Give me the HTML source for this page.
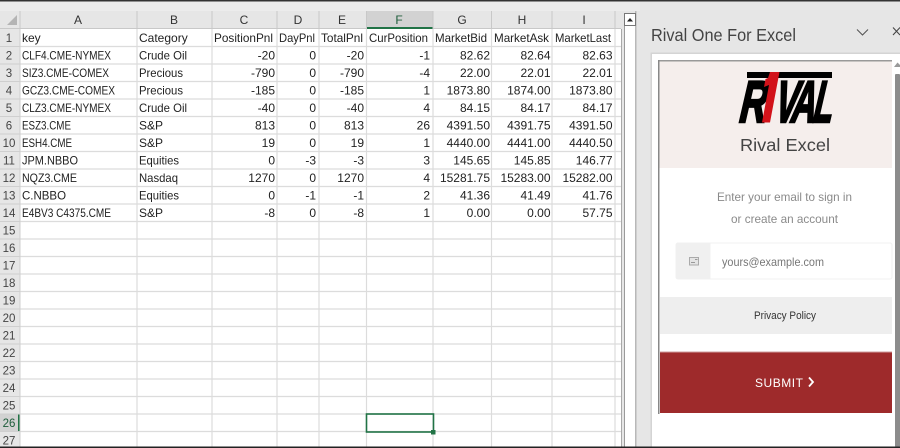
<!DOCTYPE html>
<html><head><meta charset="utf-8">
<style>
html,body{margin:0;padding:0;width:900px;height:448px;overflow:hidden;background:#fff}
svg{display:block}
.c{font:12px "Liberation Sans",sans-serif;fill:#222}
.e{text-anchor:end}
.h{font:12px "Liberation Sans",sans-serif;fill:#333;text-anchor:middle}
.r{font:11.5px "Liberation Sans",sans-serif;fill:#444;text-anchor:middle}
</style></head><body>
<svg width="900" height="448" viewBox="0 0 900 448" xmlns="http://www.w3.org/2000/svg">
<rect width="900" height="448" fill="#fff"/>
<!-- top chrome -->
<rect width="900" height="29" fill="#e8e8e8"/>
<rect width="900" height="11" fill="#ececec"/>
<rect width="900" height="1.5" fill="#333"/>
<!-- grid -->
<g stroke="#dcdcdc" stroke-width="1.2" fill="none">
<path d="M137 29V447M212 29V447M277 29V447M319 29V447M366.5 29V447M433 29V447M491.5 29V447M552 29V447M615 29V447"/>
<path d="M20 46.5H621M20 64H621M20 81.5H621M20 99H621M20 116.5H621M20 134H621M20 151.5H621M20 169H621M20 186.5H621M20 204H621M20 221.5H621M20 239H621M20 256.5H621M20 274H621M20 291.5H621M20 309H621M20 326.5H621M20 344H621M20 361.5H621M20 379H621M20 396.5H621M20 414H621M20 431.5H621"/>
</g>
<!-- column headers -->
<rect x="0" y="11" width="621" height="18" fill="#e6e6e6"/>
<rect x="366.5" y="11" width="66.5" height="18" fill="#d2d2d2"/>
<rect x="366.5" y="27" width="66.5" height="2" fill="#217346"/>
<path d="M7 25L17 15V25Z" fill="#b4b4b4"/>
<g stroke="#c8c8c8" stroke-width="1"><path d="M20 11V29M137 11V29M212 11V29M277 11V29M319 11V29M366.5 11V29M433 11V29M491.5 11V29M552 11V29M615 11V29M0 28.500H366M433 28.500H621"/></g>
<text class="h" x="78" y="24">A</text><text class="h" x="174" y="24">B</text><text class="h" x="244" y="24">C</text><text class="h" x="298" y="24">D</text><text class="h" x="342" y="24">E</text><text class="h" x="399" y="24" style="fill:#1d5c3a">F</text><text class="h" x="462" y="24">G</text><text class="h" x="522" y="24">H</text><text class="h" x="584" y="24">I</text>
<!-- row headers -->
<rect x="0" y="29" width="20" height="419" fill="#e6e6e6"/>
<rect x="0" y="414" width="20" height="17.500" fill="#d2d2d2"/>
<rect x="18" y="414" width="2" height="17.500" fill="#217346"/>
<g stroke="#cfcfcf" stroke-width="1"><path d="M20 29V447M0 46.5H20M0 64H20M0 81.5H20M0 99H20M0 116.5H20M0 134H20M0 151.5H20M0 169H20M0 186.5H20M0 204H20M0 221.5H20M0 239H20M0 256.5H20M0 274H20M0 291.5H20M0 309H20M0 326.5H20M0 344H20M0 361.5H20M0 379H20M0 396.5H20M0 414H20M0 431.5H20"/></g>
<text class="r" x="9" y="42">1</text><text class="r" x="9" y="59.5">2</text><text class="r" x="9" y="77">3</text><text class="r" x="9" y="94.500">4</text><text class="r" x="9" y="112">5</text><text class="r" x="9" y="129.5">6</text><text class="r" x="9" y="147">10</text><text class="r" x="9" y="164.5">11</text><text class="r" x="9" y="182">12</text><text class="r" x="9" y="199.5">13</text><text class="r" x="9" y="217">14</text><text class="r" x="9" y="234.5">15</text><text class="r" x="9" y="252">16</text><text class="r" x="9" y="269.5">17</text><text class="r" x="9" y="287">18</text><text class="r" x="9" y="304.5">19</text><text class="r" x="9" y="322">20</text><text class="r" x="9" y="339.5">21</text><text class="r" x="9" y="357">22</text><text class="r" x="9" y="374.5">23</text><text class="r" x="9" y="392">24</text><text class="r" x="9" y="409.5">25</text><text class="r" x="9" y="427" style="fill:#1d5c3a">26</text><text class="r" x="9" y="444.5">27</text>
<!-- header row -->
<g class="c">
<text x="22" y="42">key</text><text x="139" y="42">Category</text>
<text x="214" y="42" textLength="59" lengthAdjust="spacingAndGlyphs">PositionPnl</text>
<text x="279" y="42" textLength="36" lengthAdjust="spacingAndGlyphs">DayPnl</text>
<text x="321" y="42" textLength="42" lengthAdjust="spacingAndGlyphs">TotalPnl</text>
<text x="369" y="42" textLength="59" lengthAdjust="spacingAndGlyphs">CurPosition</text>
<text x="435" y="42" textLength="52" lengthAdjust="spacingAndGlyphs">MarketBid</text>
<text x="494" y="42" textLength="55" lengthAdjust="spacingAndGlyphs">MarketAsk</text>
<text x="555" y="42" textLength="56" lengthAdjust="spacingAndGlyphs">MarketLast</text>
<!-- keys -->
<text x="22" y="59.5" textLength="89" lengthAdjust="spacingAndGlyphs">CLF4.CME-NYMEX</text>
<text x="22" y="77" textLength="87" lengthAdjust="spacingAndGlyphs">SIZ3.CME-COMEX</text>
<text x="22" y="94.5" textLength="93" lengthAdjust="spacingAndGlyphs">GCZ3.CME-COMEX</text>
<text x="22" y="112" textLength="89" lengthAdjust="spacingAndGlyphs">CLZ3.CME-NYMEX</text>
<text x="22" y="129.5" textLength="49" lengthAdjust="spacingAndGlyphs">ESZ3.CME</text>
<text x="22" y="147" textLength="50" lengthAdjust="spacingAndGlyphs">ESH4.CME</text>
<text x="22" y="164.5" textLength="56" lengthAdjust="spacingAndGlyphs">JPM.NBBO</text>
<text x="22" y="182" textLength="55" lengthAdjust="spacingAndGlyphs">NQZ3.CME</text>
<text x="22" y="199.5" textLength="44" lengthAdjust="spacingAndGlyphs">C.NBBO</text>
<text x="22" y="217" textLength="89" lengthAdjust="spacingAndGlyphs">E4BV3 C4375.CME</text>
<!-- category -->
<text x="139" y="59.5" textLength="48" lengthAdjust="spacingAndGlyphs">Crude Oil</text>
<text x="139" y="77" textLength="44" lengthAdjust="spacingAndGlyphs">Precious</text>
<text x="139" y="94.5" textLength="44" lengthAdjust="spacingAndGlyphs">Precious</text>
<text x="139" y="112" textLength="48" lengthAdjust="spacingAndGlyphs">Crude Oil</text>
<text x="139" y="129.5">S&amp;P</text>
<text x="139" y="147">S&amp;P</text>
<text x="139" y="164.5" textLength="40" lengthAdjust="spacingAndGlyphs">Equities</text>
<text x="139" y="182" textLength="39" lengthAdjust="spacingAndGlyphs">Nasdaq</text>
<text x="139" y="199.5" textLength="40" lengthAdjust="spacingAndGlyphs">Equities</text>
<text x="139" y="217">S&amp;P</text>
</g>
<!-- numbers -->
<text class="c e" x="275" y="59.5">-20</text><text class="c e" x="316" y="59.5">0</text><text class="c e" x="364" y="59.5">-20</text><text class="c e" x="430" y="59.5">-1</text><text class="c e" x="490" y="59.5">82.62</text><text class="c e" x="550.5" y="59.5">82.64</text><text class="c e" x="612.5" y="59.5">82.63</text>
<text class="c e" x="275" y="77">-790</text><text class="c e" x="316" y="77">0</text><text class="c e" x="364" y="77">-790</text><text class="c e" x="430" y="77">-4</text><text class="c e" x="490" y="77">22.00</text><text class="c e" x="550.5" y="77">22.01</text><text class="c e" x="612.5" y="77">22.01</text>
<text class="c e" x="275" y="94.5">-185</text><text class="c e" x="316" y="94.5">0</text><text class="c e" x="364" y="94.5">-185</text><text class="c e" x="430" y="94.5">1</text><text class="c e" x="490" y="94.5">1873.80</text><text class="c e" x="550.5" y="94.5">1874.00</text><text class="c e" x="612.5" y="94.5">1873.80</text>
<text class="c e" x="275" y="112">-40</text><text class="c e" x="316" y="112">0</text><text class="c e" x="364" y="112">-40</text><text class="c e" x="430" y="112">4</text><text class="c e" x="490" y="112">84.15</text><text class="c e" x="550.5" y="112">84.17</text><text class="c e" x="612.5" y="112">84.17</text>
<text class="c e" x="275" y="129.5">813</text><text class="c e" x="316" y="129.5">0</text><text class="c e" x="364" y="129.5">813</text><text class="c e" x="430" y="129.5">26</text><text class="c e" x="490" y="129.5">4391.50</text><text class="c e" x="550.5" y="129.5">4391.75</text><text class="c e" x="612.5" y="129.5">4391.50</text>
<text class="c e" x="275" y="147">19</text><text class="c e" x="316" y="147">0</text><text class="c e" x="364" y="147">19</text><text class="c e" x="430" y="147">1</text><text class="c e" x="490" y="147">4440.00</text><text class="c e" x="550.5" y="147">4441.00</text><text class="c e" x="612.5" y="147">4440.50</text>
<text class="c e" x="275" y="164.5">0</text><text class="c e" x="316" y="164.5">-3</text><text class="c e" x="364" y="164.5">-3</text><text class="c e" x="430" y="164.5">3</text><text class="c e" x="490" y="164.5">145.65</text><text class="c e" x="550.5" y="164.5">145.85</text><text class="c e" x="612.5" y="164.5">146.77</text>
<text class="c e" x="275" y="182">1270</text><text class="c e" x="316" y="182">0</text><text class="c e" x="364" y="182">1270</text><text class="c e" x="430" y="182">4</text><text class="c e" x="490" y="182">15281.75</text><text class="c e" x="550.5" y="182">15283.00</text><text class="c e" x="612.5" y="182">15282.00</text>
<text class="c e" x="275" y="199.5">0</text><text class="c e" x="316" y="199.5">-1</text><text class="c e" x="364" y="199.5">-1</text><text class="c e" x="430" y="199.5">2</text><text class="c e" x="490" y="199.5">41.36</text><text class="c e" x="550.5" y="199.5">41.49</text><text class="c e" x="612.5" y="199.5">41.76</text>
<text class="c e" x="275" y="217">-8</text><text class="c e" x="316" y="217">0</text><text class="c e" x="364" y="217">-8</text><text class="c e" x="430" y="217">1</text><text class="c e" x="490" y="217">0.00</text><text class="c e" x="550.5" y="217">0.00</text><text class="c e" x="612.5" y="217">57.75</text>
<!-- selection -->
<rect x="366.5" y="414" width="67" height="18" fill="none" stroke="#217346" stroke-width="1.6"/>
<rect x="431" y="430" width="4.500" height="4.500" fill="#217346"/>
<!-- sheet scrollbar -->
<rect x="621" y="11" width="19" height="437" fill="#e6e6e6"/>
<rect x="621" y="29" width="1" height="419" fill="#a8a8a8"/>
<rect x="624" y="26" width="11" height="422" fill="#fff"/>
<rect x="624" y="26" width="1" height="422" fill="#9a9a9a"/>
<rect x="635" y="11" width="1.500" height="437" fill="#b8b8b8"/>
<rect x="624.500" y="13.500" width="11" height="12" fill="#fff" stroke="#777" stroke-width="1"/>
<path d="M627 21.500H633L630 18Z" fill="#222"/>
<!-- pane -->
<rect x="640" y="1.500" width="260" height="446.500" fill="#e6e6e6"/>
<text x="651" y="41" font-family="Liberation Sans,sans-serif" font-size="17.500" fill="#444" textLength="145" lengthAdjust="spacingAndGlyphs">Rival One For Excel</text>
<path d="M857 29.500L862.500 35L868 29.500" fill="none" stroke="#555" stroke-width="1.100"/>
<path d="M893 27.500L900 35M900 27.500L893 35" fill="none" stroke="#444" stroke-width="1.100"/>
<rect x="650.500" y="52.500" width="250" height="395.500" fill="#fff"/>
<rect x="650.500" y="52.500" width="250" height="1.500" fill="#d4d4d4"/>
<rect x="650.500" y="52.500" width="1.500" height="395.500" fill="#d4d4d4"/>
<!-- frame -->
<rect x="658" y="60" width="234" height="1.500" fill="#999"/>
<rect x="658" y="60" width="1.500" height="354" fill="#888"/>
<rect x="659.500" y="61.500" width="232.500" height="106.500" fill="#f5eeec"/>
<rect x="895" y="74" width="5" height="373" fill="#8c8c8c" rx="1"/>
<path d="M894 67L897.500 62.500L900 65V67Z" fill="#999"/>
<!-- logo -->
<rect x="747" y="72" width="85" height="6" fill="#000"/>
<g font-family="Liberation Sans,sans-serif" font-weight="700" fill="#000" stroke="#000" stroke-width="2.400">
<text transform="translate(737 122) skewX(-13) scale(.66 1.03)" font-size="57">R</text>
<text transform="translate(772 122) skewX(-13) scale(.60 1.03)" font-size="57">V</text>
<text transform="translate(789 122) skewX(-13) scale(.60 1.03)" font-size="57">A</text>
<text transform="translate(811 122) skewX(-13) scale(.56 1.03)" font-size="57">L</text>
</g>
<rect x="747" y="78" width="85" height="1.500" fill="#f5eeec"/>
<path d="M770 72H779.500L770 122.500H762L769 85L764 87L765.500 79L768 78Z" fill="#d2121a"/>
<text x="740" y="151" font-family="Liberation Sans,sans-serif" font-size="17.500" fill="#444" textLength="90" lengthAdjust="spacingAndGlyphs">Rival Excel</text>
<!-- form -->
<text x="717" y="201" font-family="Liberation Sans,sans-serif" font-size="12" fill="#8a8a8a" textLength="135" lengthAdjust="spacingAndGlyphs">Enter your email to sign in</text>
<text x="731" y="223" font-family="Liberation Sans,sans-serif" font-size="12" fill="#8a8a8a" textLength="107" lengthAdjust="spacingAndGlyphs">or create an account</text>
<rect x="676" y="243" width="216" height="36" rx="2" fill="#fff" stroke="#f1f1f1" stroke-width="1"/>
<path d="M676 245a2 2 0 0 1 2-2H710.500V279H678a2 2 0 0 1-2-2Z" fill="#f0f0f0"/>
<rect x="689.500" y="257.500" width="9" height="7.500" fill="#e4e4e4" stroke="#aaa" stroke-width="1"/>
<path d="M691 262.500H695M695 259.500H697.500" stroke="#999" stroke-width="1"/>
<text x="722" y="266" font-family="Liberation Sans,sans-serif" font-size="12" fill="#777" textLength="102" lengthAdjust="spacingAndGlyphs">yours@example.com</text>
<rect x="660" y="297" width="232" height="37" fill="#eeeeee"/>
<text x="754" y="319" font-family="Liberation Sans,sans-serif" font-size="11" fill="#333" textLength="62" lengthAdjust="spacingAndGlyphs">Privacy Policy</text>
<rect x="660" y="352" width="232" height="61" fill="#9e2a2b"/>
<rect x="660" y="351.500" width="232" height="1" fill="#cf9c9c"/>
<text x="755" y="387" font-family="Liberation Sans,sans-serif" font-size="12" fill="#fff" textLength="48" lengthAdjust="spacing">SUBMIT</text>
<path d="M809 377.500L813 382L809 386.500" fill="none" stroke="#fff" stroke-width="1.800"/>
<!-- bottom edge -->
<rect y="446.500" width="900" height="1.500" fill="#222"/>
</svg>
</body></html>
